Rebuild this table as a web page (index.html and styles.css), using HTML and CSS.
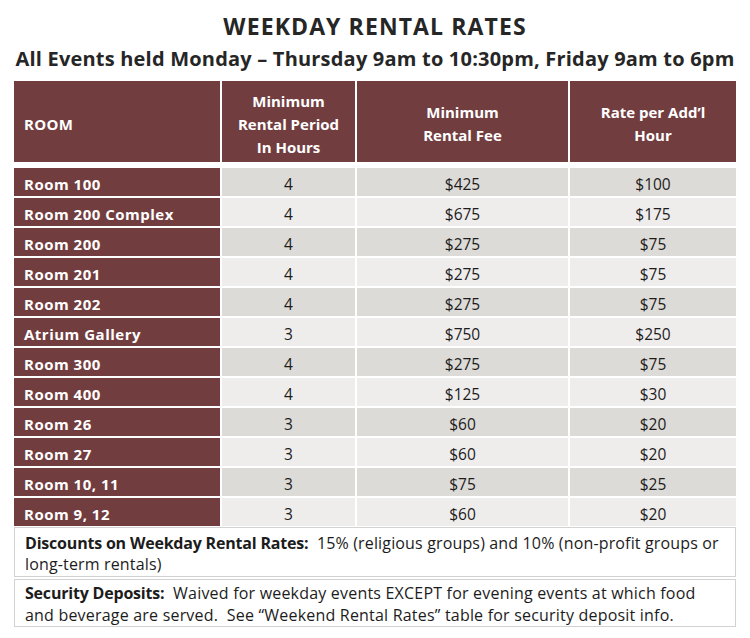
FILE: index.html
```html
<!DOCTYPE html>
<html>
<head>
<meta charset="utf-8">
<link rel="stylesheet" href="styles.css">
</head>
<body>
<div class="page">
  <h1 class="title">WEEKDAY RENTAL RATES</h1>
  <p class="subtitle">All Events held Monday – Thursday 9am to 10:30pm, Friday 9am to 6pm</p>
  <div class="rates">
    <div class="row head">
      <div class="cell room">ROOM</div>
      <div class="cell">Minimum<br>Rental Period<br>In Hours</div>
      <div class="cell">Minimum<br>Rental Fee</div>
      <div class="cell">Rate per Add’l<br>Hour</div>
    </div>
    <div class="body">
      <div class="row odd"><div class="cell room">Room 100</div><div class="cell">4</div><div class="cell">$425</div><div class="cell">$100</div></div>
      <div class="row even"><div class="cell room">Room 200 Complex</div><div class="cell">4</div><div class="cell">$675</div><div class="cell">$175</div></div>
      <div class="row odd"><div class="cell room">Room 200</div><div class="cell">4</div><div class="cell">$275</div><div class="cell">$75</div></div>
      <div class="row even"><div class="cell room">Room 201</div><div class="cell">4</div><div class="cell">$275</div><div class="cell">$75</div></div>
      <div class="row odd"><div class="cell room">Room 202</div><div class="cell">4</div><div class="cell">$275</div><div class="cell">$75</div></div>
      <div class="row even"><div class="cell room">Atrium Gallery</div><div class="cell">3</div><div class="cell">$750</div><div class="cell">$250</div></div>
      <div class="row odd"><div class="cell room">Room 300</div><div class="cell">4</div><div class="cell">$275</div><div class="cell">$75</div></div>
      <div class="row even"><div class="cell room">Room 400</div><div class="cell">4</div><div class="cell">$125</div><div class="cell">$30</div></div>
      <div class="row odd"><div class="cell room">Room 26</div><div class="cell">3</div><div class="cell">$60</div><div class="cell">$20</div></div>
      <div class="row even"><div class="cell room">Room 27</div><div class="cell">3</div><div class="cell">$60</div><div class="cell">$20</div></div>
      <div class="row odd"><div class="cell room">Room 10, 11</div><div class="cell">3</div><div class="cell">$75</div><div class="cell">$25</div></div>
      <div class="row even"><div class="cell room">Room 9, 12</div><div class="cell">3</div><div class="cell">$60</div><div class="cell">$20</div></div>
    </div>
  </div>
  <div class="note note-first"><b>Discounts on Weekday Rental Rates:</b>&nbsp; 15% (religious groups) and 10% (non-profit groups or<br>long-term rentals)</div>
  <div class="note note-second"><b>Security Deposits:</b>&nbsp; Waived for weekday events EXCEPT for evening events at which food<br>and beverage are served.&nbsp; See “Weekend Rental Rates” table for security deposit info.</div>
</div>
</body>
</html>
```
FILE: styles.css
```css
* { box-sizing: border-box; }
html, body { margin: 0; padding: 0; background: #ffffff; }
body {
  font-family: "Open Sans", Lato, "DejaVu Sans", sans-serif;
  color: #1c1c1c;
}
.page {
  width: 750px;
  padding: 11px 14px 0 14px;
}
.title {
  margin: 0;
  text-align: center;
  font-size: 23px;
  letter-spacing: 1.1px;
  line-height: 30px;
  font-weight: 700;
  color: #262626;
}
.subtitle {
  margin: 5px 0 0 0;
  text-align: center;
  font-size: 20px;
  letter-spacing: 0.2px;
  line-height: 26px;
  font-weight: 700;
  color: #262626;
  white-space: nowrap;
}
.rates {
  margin-top: 9px;
  display: flex;
  flex-direction: column;
  gap: 6px;
}
.body {
  display: flex;
  flex-direction: column;
  gap: 2px;
}
.row {
  display: grid;
  grid-template-columns: 206px 133px 211px 166px;
  column-gap: 2px;
}
.cell {
  display: flex;
  align-items: center;
  justify-content: center;
  text-align: center;
  font-size: 15.5px;
  height: 28px;
  padding-top: 4px;
}
.head .cell {
  height: 81px;
  background: #723d3f;
  color: #ffffff;
  font-weight: 700;
  font-size: 15px;
  line-height: 23px;
  padding-top: 5px;
}
.cell.room {
  justify-content: flex-start;
  text-align: left;
  padding-left: 10px;
  background: #723d3f;
  color: #ffffff;
  font-weight: 700;
  font-size: 15px;
  letter-spacing: 0.5px;
}
.head .cell.room { letter-spacing: 0.3px; }
.odd .cell { background: #dcdbd7; }
.even .cell { background: #efedec; }
.odd .cell.room, .even .cell.room { background: #723d3f; }
.note {
  border: 1px solid #d2d2d2;
  padding: 5px 10px 1px 10px;
  font-size: 16px;
  line-height: 21px;
  letter-spacing: 0.15px;
  white-space: nowrap;
}
.note b { letter-spacing: -0.2px; }
.note-first { margin-top: 1px; }
.note-second {
  margin-top: 2px;
  padding-top: 3px;
  padding-bottom: 0;
  line-height: 21.5px;
  letter-spacing: 0.2px;
}
```
